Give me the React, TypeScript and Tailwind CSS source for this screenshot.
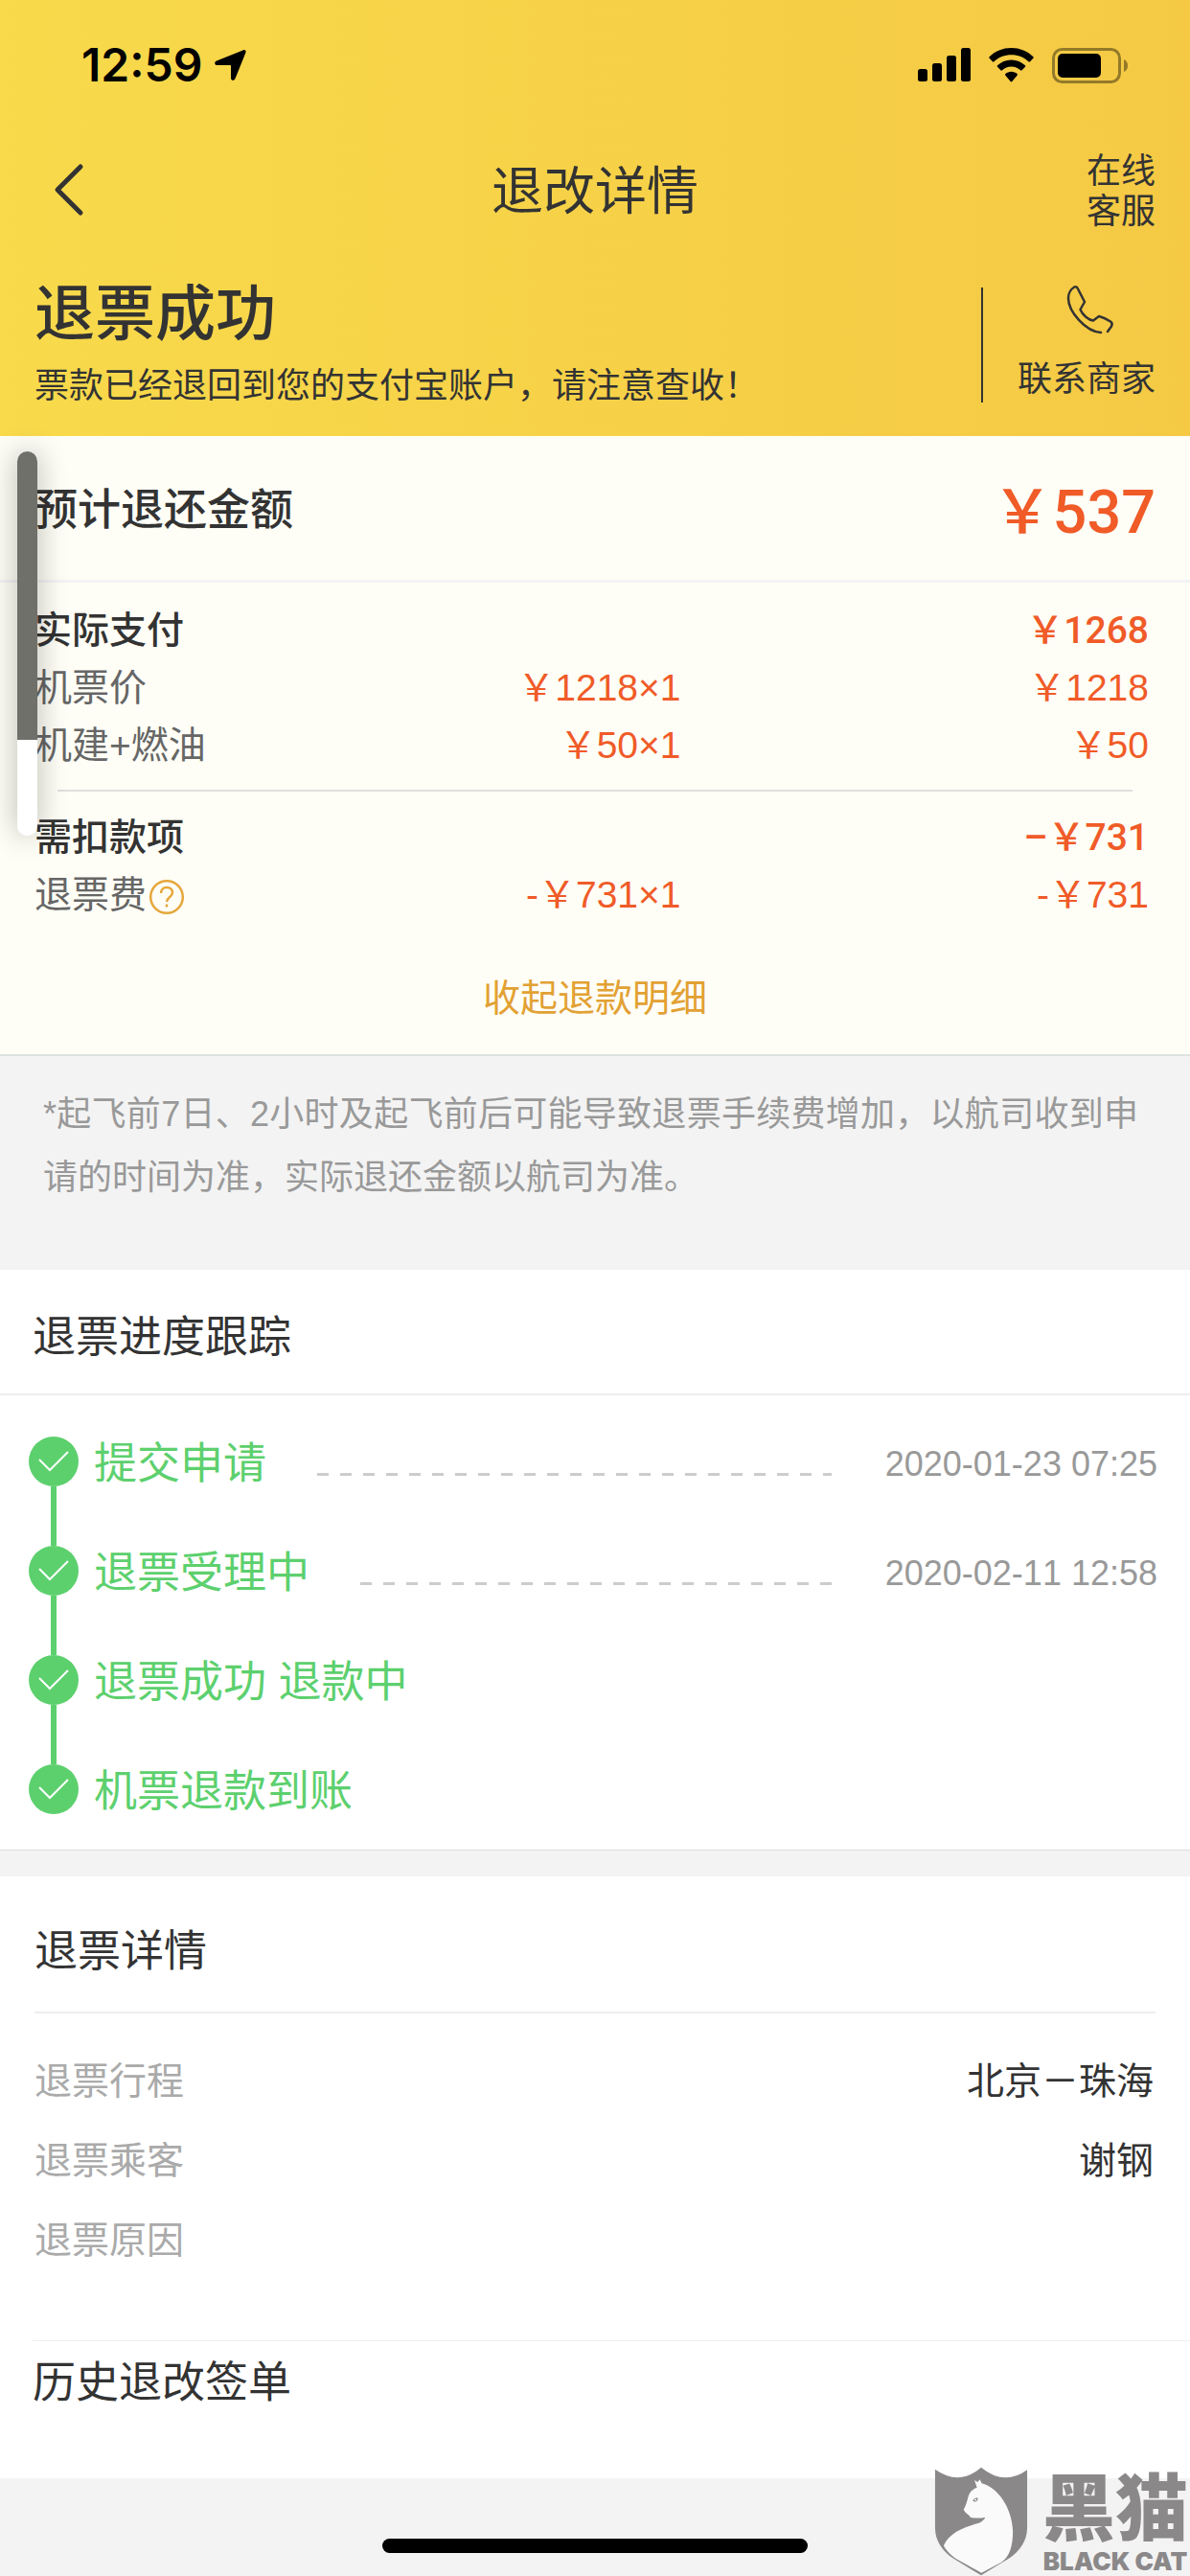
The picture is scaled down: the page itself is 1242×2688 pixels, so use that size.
import { useState } from "react";

type FeeRow = {
  label: string;
  unit?: string;
  amount: string;
  strong?: boolean;
  help?: boolean;
};

const paidRows: FeeRow[] = [
  { label: "实际支付", amount: "￥1268", strong: true },
  { label: "机票价", unit: "￥1218×1", amount: "￥1218" },
  { label: "机建+燃油", unit: "￥50×1", amount: "￥50" },
];

const deductRows: FeeRow[] = [
  { label: "需扣款项", amount: "–￥731", strong: true },
  { label: "退票费", unit: "-￥731×1", amount: "-￥731", help: true },
];

const steps = [
  { title: "提交申请", time: "2020-01-23 07:25" },
  { title: "退票受理中", time: "2020-02-11 12:58" },
  { title: "退票成功 退款中" },
  { title: "机票退款到账" },
];

const details = [
  { label: "退票行程", value: "北京－珠海" },
  { label: "退票乘客", value: "谢钢" },
  { label: "退票原因", value: "" },
];

function StatusBar() {
  return (
    <div className="flex h-[132px] items-center justify-between pt-1 pr-[65px] pl-[85px] text-black">
      <div className="flex items-center gap-[13px]">
        <span className="font-['Inter',sans-serif] text-[48px] leading-[60px] font-semibold">12:59</span>
        <svg className="h-[32px] w-[33px]" viewBox="0 0 33 32" fill="currentColor">
          <path d="M29.500 .4c2-.9 3.600.5 2.900 2.500L21.500 30c-1 2.600-4.500 2.300-4.500-.6V17c0-.6-.4-1-1-1H2.800c-3 0-3.500-3.300-.8-4.400z" />
        </svg>
      </div>
      <div className="flex items-center gap-[19px]">
        <svg className="h-[36px] w-[55px]" viewBox="0 0 55 36" fill="currentColor">
          <rect x="0" y="22" width="10" height="13" rx="2.500" />
          <rect x="15" y="16" width="10" height="19" rx="2.500" />
          <rect x="30" y="8" width="10" height="27" rx="2.500" />
          <rect x="45" y="0" width="10" height="35" rx="2.500" />
        </svg>
        <svg className="h-[36px] w-[47px]" viewBox="0 0 47 36" fill="currentColor">
          <path d="M23.500 0C14.500 0 6.500 3.400.6 9.200c-.5.5-.5 1.100 0 1.600l3.300 3.500c.5.500 1.100.5 1.600 0C10.200 9.800 16.500 7.200 23.500 7.200s13.300 2.600 18 7.100c.5.500 1.100.5 1.600 0l3.300-3.500c.5-.5.5-1.100 0-1.600C40.500 3.400 32.500 0 23.500 0z" />
          <path d="M23.500 12.400c-5.700 0-10.700 2.200-14.500 5.800-.5.500-.5 1.100 0 1.600l3.400 3.500c.5.500 1.100.5 1.600 0 2.500-2.300 5.800-3.700 9.500-3.700s7 1.400 9.500 3.700c.5.500 1.100.5 1.600 0l3.400-3.500c.5-.5.5-1.100 0-1.600-3.800-3.600-8.800-5.800-14.500-5.800z" />
          <path d="M23.500 24.800c-2.400 0-4.500.9-6.100 2.300-.5.500-.5 1.100 0 1.600l5.300 6.400c.5.600 1.100.6 1.600 0l5.300-6.400c.5-.5.5-1.100 0-1.600-1.600-1.400-3.700-2.300-6.100-2.300z" />
        </svg>
        <svg className="h-[37px] w-[79px]" viewBox="0 0 79 37">
          <rect x="1.500" y="1.500" width="69" height="34" rx="9" fill="none" stroke="#000" strokeOpacity=".4" strokeWidth="3" />
          <rect x="6" y="6" width="45" height="25" rx="5" />
          <path d="M75 12c2.500 1 4 3.500 4 6.500S77.500 24 75 25z" fillOpacity=".4" />
        </svg>
      </div>
    </div>
  );
}

function FeeTable({ rows }: { rows: FeeRow[] }) {
  return (
    <table className="w-full table-fixed text-[39px] leading-[60px]">
      <tbody>
        {rows.map((row) => (
          <tr key={row.label}>
            <th
              scope="row"
              className={
                row.strong
                  ? "w-[30%] p-0 text-left font-medium text-[#333]"
                  : "w-[30%] p-0 text-left font-normal text-[#666]"
              }
            >
              <span className="flex items-center gap-[2px] whitespace-nowrap">
                {row.label}
                {row.help && (
                  <button type="button" aria-label="退票费说明" className="pt-1 text-[#e5a73c]">
                    <svg className="size-[38px]" viewBox="0 0 38 38" fill="none" stroke="currentColor" strokeWidth="2.500">
                      <circle cx="19" cy="19" r="16.800" />
                      <path d="M13 15c0-3.800 2.500-6 6-6s6 2.200 6 5.400c0 4.600-6 5-6 9.600" />
                      <path d="M19 26.500v3" />
                    </svg>
                  </button>
                )}
              </span>
            </th>
            <td className="w-[28%] p-0 text-right text-[#f05b28]">{row.unit}</td>
            <td
              className={
                row.strong
                  ? "p-0 text-right font-['Roboto','Noto_Sans_CJK_SC',sans-serif] font-medium text-[#f05b28]"
                  : "p-0 text-right text-[#f05b28]"
              }
            >
              {row.amount}
            </td>
          </tr>
        ))}
      </tbody>
    </table>
  );
}

function Watermark() {
  return (
    <div className="pointer-events-none absolute right-0 bottom-0 flex items-end gap-[15px] text-[#8b8889]">
      <svg className="h-[114px] w-[98px]" viewBox="93 98 292 344">
        <path
          d="M94 106Q170 160 239 100Q312 160 384 108V290C384 330 362 362 325 388L239 440L153 388C116 362 94 330 94 290Z"
          fill="currentColor"
        />
        <path
          d="M218 140L228 146L235 138L241 150C290 162 336 225 339 300C339 350 328 380 304 398L240 432L160 388C140 372 128 360 121 346C140 305 185 288 232 275C243 271 249 264 252 257C235 261 215 260 205 257C203 248 188 246 184 232C190 222 193 210 197 198C202 178 210 170 226 164Z"
          fill="#fafafa"
        />
        <path d="M213 206C214 198 221 195 229 196C229 205 223 212 213 206Z" fill="currentColor" />
        <circle cx="221" cy="202" r="3" fill="#fafafa" />
      </svg>
      <div className="flex flex-col items-center pr-[2px] font-black">
        <span className="text-[76px] leading-[78px]">黑猫</span>
        <span className="font-['Inter',sans-serif] text-[26px] leading-[30px] whitespace-nowrap">BLACK CAT</span>
      </div>
    </div>
  );
}

export default function App() {
  const [expanded, setExpanded] = useState(true);

  return (
    <div className="relative flex min-h-screen flex-col overflow-hidden bg-[#f3f3f3] font-['Liberation_Sans','Noto_Sans_CJK_SC',sans-serif] text-[#333]">
      <header className="bg-linear-to-r from-[#f8da4b] to-[#f5c944] pb-[30px]">
        <StatusBar />

        {/* Navigation */}
        <nav className="grid h-[132px] grid-cols-[1fr_auto_1fr] items-center px-[36px]">
          <button type="button" aria-label="返回" className="flex w-[72px] justify-center justify-self-start">
            <svg className="h-[56px] w-[36px]" viewBox="0 0 36 56" fill="none" stroke="currentColor" strokeWidth="5" strokeLinecap="round" strokeLinejoin="round">
              <path d="M30 4L6 28l24 24" />
            </svg>
          </button>
          <h1 className="pt-[4px] text-[54px] leading-[66px]">退改详情</h1>
          <button type="button" className="w-[72px] justify-self-end pt-[4px] text-[36px] leading-[42px]">
            在线客服
          </button>
        </nav>

        {/* Result */}
        <div className="flex justify-between px-[36px]">
          <div className="pt-[27px]">
            <h2 className="text-[63px] leading-[72px] font-medium">退票成功</h2>
            <p className="pt-[17px] text-[36px] leading-[45px]">票款已经退回到您的支付宝账户，请注意查收！</p>
          </div>
          <button type="button" className="mt-[36px] flex h-[120px] flex-col items-center justify-between border-l-2 border-[#333] pl-[36px]">
            <svg className="h-[52px] w-[50px]" viewBox="-4 2 50 52" fill="none" stroke="currentColor" strokeWidth="2.500" strokeLinecap="round" strokeLinejoin="round" overflow="visible">
              <path d="M36 49C20 48 2 27 2 13c0-5 3-9.500 6-11.300 1.500-.8 3-.5 3.800 1.300L19 17l-4.500 8C17 31 23 36 28 36.500l6-4.500c4 1 8 3 12 5.500 2 1.300 2 3 1 5L43 48" />
            </svg>
            <span className="text-[36px] leading-[48px]">联系商家</span>
          </button>
        </div>
      </header>

      {/* Refund amount */}
      <section className="relative border-b-2 border-[#dfe3df] bg-[#fefef6]">
        <div className="flex h-[153px] items-center justify-between border-b-[3px] border-[#f3f3f5] px-[36px] pt-[6px]">
          <h2 className="text-[45px] leading-[60px] font-medium">预计退还金额</h2>
          <strong className="pt-[4px] font-['Roboto','Noto_Sans_CJK_SC',sans-serif] text-[63px] leading-[72px] font-medium text-[#f05b28]">￥537</strong>
        </div>
        {expanded && (
          <div className="pt-[20px] pr-[43px] pl-[36px]">
            <FeeTable rows={paidRows} />
            <hr className="mt-[16px] mr-[17px] mb-[18px] ml-[24px] border-t-2 border-[#dfdfdf]" />
            <FeeTable rows={deductRows} />
          </div>
        )}
        <div className="flex justify-center pt-[48px] pb-[28px]">
          <button type="button" onClick={() => setExpanded(!expanded)} className="text-[39px] leading-[60px] text-[#e2a133]">
            {expanded ? "收起退款明细" : "展开退款明细"}
          </button>
        </div>

        {/* Volume overlay */}
        <div className="absolute top-[16px] left-[18px] h-[401px] w-[21px] rounded-full shadow-[0_0_30px_rgba(0,0,0,0.3)]">
          <div className="h-full overflow-hidden rounded-full bg-white">
            <div className="h-3/4 bg-[#6f706a]" />
          </div>
        </div>
      </section>

      <p className="pt-[28px] pr-[54px] pb-[63px] pl-[45px] text-justify text-[36px] leading-[66px] text-[#999]">
        *起飞前7日、2小时及起飞前后可能导致退票手续费增加，以航司收到申请的时间为准，实际退还金额以航司为准。
      </p>

      {/* Progress */}
      <section className="border-b border-[#ddd] bg-white">
        <h2 className="border-b-2 border-[#ededed] pt-[41px] pb-[28px] pl-[34px] text-[45px] leading-[60px]">退票进度跟踪</h2>
        <ol className="pt-[43px] pr-[34px] pb-[37px] pl-[30px]">
          {steps.map((step, i) => (
            <li key={step.title}>
              {i > 0 && <div className="ml-[23px] h-[62px] w-[6px] bg-[#5dd06e]" />}
              <div className="flex h-[52px] items-center">
                <span className="flex size-[52px] items-center justify-center rounded-full bg-[#5dd06e]">
                  <svg className="h-[22px] w-[32px]" viewBox="0 0 32 22" fill="none" stroke="#fff" strokeWidth="2">
                    <path d="M1 9l11 11L31 1" />
                  </svg>
                </span>
                <span className="pt-[6px] pl-[16px] text-[45px] leading-[46px] text-[#5dd06e]">{step.title}</span>
                {step.time && (
                  <>
                    <span className="mt-[26px] mr-[56px] ml-[53px] h-[3px] flex-1 bg-[repeating-linear-gradient(90deg,#ccc_0_12px,transparent_12px_24px)]" />
                    <time className="pt-[6px] text-[36px] leading-[46px] text-[#999] [font-kerning:none]">{step.time}</time>
                  </>
                )}
              </div>
            </li>
          ))}
        </ol>
      </section>

      {/* Ticket details */}
      <section className="mt-[27px] bg-white">
        <div className="px-[36px]">
          <h2 className="border-b-2 border-[#eee] pt-[49px] pb-[32px] text-[45px] leading-[60px]">退票详情</h2>
          <dl className="pt-[29px] pr-[2px] pb-[63px] text-[39px] leading-[83px]">
            {details.map((item) => (
              <div key={item.label} className="flex justify-between">
                <dt className="text-[#aaa]">{item.label}</dt>
                <dd>{item.value}</dd>
              </div>
            ))}
          </dl>
        </div>
        <div className="pl-[34px]">
          <h2 className="border-t border-[#eee] pt-[14px] pb-[69px] text-[45px] leading-[60px]">历史退改签单</h2>
        </div>
      </section>

      <footer className="flex flex-1 items-end justify-center pb-[24px]">
        <div className="h-[15px] w-[444px] rounded-full bg-black" />
      </footer>

      <Watermark />
    </div>
  );
}
